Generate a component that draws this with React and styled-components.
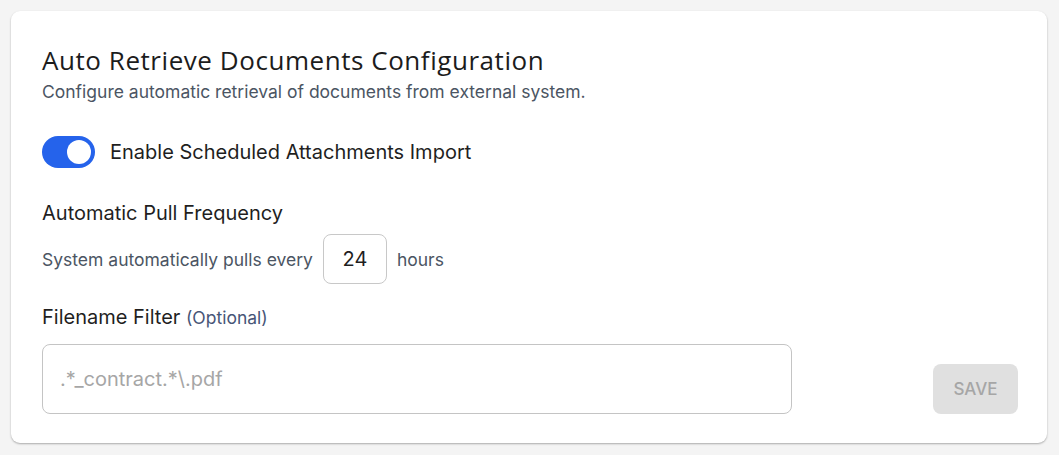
import React, { useState } from "react";
import styled, { createGlobalStyle } from "styled-components";

const GlobalStyle = createGlobalStyle`
  body {
    margin: 0;
    background: #f4f4f4;
    font-family: Inter, "Liberation Sans", sans-serif;
  }
`;

const Page = () => {
  const [enabled, setEnabled] = useState(true);
  const [hours, setHours] = useState("24");
  const [filter, setFilter] = useState("");

  return (
    <Wrapper>
      <GlobalStyle />
      <Card>
        <Title>Auto Retrieve Documents Configuration</Title>
        <Subtitle>Configure automatic retrieval of documents from external system.</Subtitle>

        <ToggleRow>
          <Switch type="button" $on={enabled} onClick={() => setEnabled(!enabled)}>
            <Thumb $on={enabled} />
          </Switch>
          <ToggleLabel>Enable Scheduled Attachments Import</ToggleLabel>
        </ToggleRow>

        <Section>
          <Label>Automatic Pull Frequency</Label>
          <FreqRow>
            <Hint>System automatically pulls every</Hint>
            <HoursInput value={hours} onChange={(e) => setHours(e.target.value)} />
            <Hint>hours</Hint>
          </FreqRow>
        </Section>

        <FilterRow>
          <FilterField>
            <Label>
              Filename Filter <Optional>(Optional)</Optional>
            </Label>
            <FilterInput
              placeholder=".*_contract.*\.pdf"
              value={filter}
              onChange={(e) => setFilter(e.target.value)}
            />
          </FilterField>
          <SaveButton disabled>SAVE</SaveButton>
        </FilterRow>
      </Card>
    </Wrapper>
  );
};

const Wrapper = styled.div`
  padding: 11px 12px 12px 11px;
`;

const Card = styled.div`
  background: #fff;
  border-radius: 9px;
  box-shadow: 0 1px 2px rgba(0, 0, 0, 0.3);
  padding: 32px 29px 29px 31px;
  display: flex;
  flex-direction: column;
`;

const Title = styled.h2`
  margin: 0;
  font-family: "Open Sans", sans-serif;
  font-weight: 400;
  font-size: 26px;
  letter-spacing: 0.55px;
  line-height: 34px;
  color: #1c1c1c;
`;

const Subtitle = styled.p`
  margin: 4px 0 0;
  font-size: 17.5px;
  line-height: 22px;
  color: #4b5563;
`;

const ToggleRow = styled.div`
  display: flex;
  align-items: center;
  gap: 15px;
  margin-top: 33px;
`;

const Switch = styled.button`
  width: 53px;
  height: 32px;
  border: none;
  border-radius: 16px;
  padding: 0;
  background: ${(p) => (p.$on ? "#2563eb" : "#cbd5e1")};
  position: relative;
  cursor: pointer;
`;

const Thumb = styled.span`
  position: absolute;
  top: 4px;
  left: ${(p) => (p.$on ? "25px" : "4px")};
  width: 24px;
  height: 24px;
  border-radius: 50%;
  background: #fff;
`;

const ToggleLabel = styled.span`
  font-size: 20px;
  color: #1f1f1f;
`;

const Section = styled.div`
  display: flex;
  flex-direction: column;
  margin-top: 32px;
`;

const Label = styled.div`
  font-size: 20px;
  line-height: 26px;
  color: #1f1f1f;
`;

const Optional = styled.span`
  font-size: 17.5px;
  color: #475577;
`;

const FreqRow = styled.div`
  display: flex;
  align-items: center;
  gap: 10px;
  margin-top: 8px;
`;

const Hint = styled.span`
  font-size: 17.5px;
  color: #4b5563;
`;

const HoursInput = styled.input`
  width: 64px;
  height: 50px;
  box-sizing: border-box;
  border: 1px solid #c8c8c8;
  border-radius: 8px;
  text-align: center;
  font-family: Inter, sans-serif;
  font-size: 20px;
  color: #1f1f1f;
  outline: none;
`;

const FilterRow = styled.div`
  display: flex;
  align-items: flex-end;
  justify-content: space-between;
  margin-top: 20px;
`;

const FilterField = styled.div`
  display: flex;
  flex-direction: column;
  gap: 13px;
`;

const FilterInput = styled.input`
  width: 750px;
  height: 70px;
  box-sizing: border-box;
  border: 1px solid #c4c4c4;
  border-radius: 8px;
  padding: 0 17px;
  font-family: Inter, sans-serif;
  font-size: 20px;
  color: #1f1f1f;
  outline: none;

  &::placeholder {
    color: #a6a6a6;
  }
`;

const SaveButton = styled.button`
  width: 85px;
  height: 50px;
  border: none;
  border-radius: 8px;
  background: #e0e0e0;
  color: #a6a6a6;
  font-family: Inter, sans-serif;
  font-weight: 500;
  font-size: 17px;
`;

export default Page;
